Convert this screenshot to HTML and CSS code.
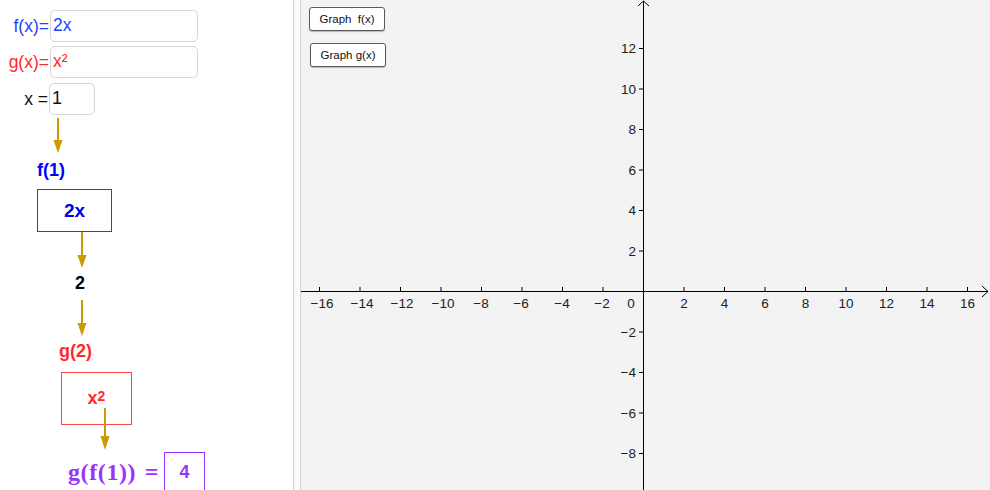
FILE: index.html
```html
<!DOCTYPE html>
<html>
<head>
<meta charset="utf-8">
<link rel="stylesheet" href="styles.css">
</head>
<body>
<div class="app">
  <div class="left">
    <div class="row r1">
      <span class="lbl blue">f(x)=</span>
      <div class="inp wide blue">2x</div>
    </div>
    <div class="row r2">
      <span class="lbl red">g(x)=</span>
      <div class="inp wide red">x²</div>
    </div>
    <div class="row r3">
      <span class="lbl lblx">x =</span>
      <div class="inp narrow">1</div>
    </div>
    <svg class="arrow a1" width="12" height="35" viewBox="0 0 12 35"><line x1="6" y1="0" x2="6" y2="24" stroke="#cc9900" stroke-width="2"/><polygon points="1.5,22 10.5,22 6,35" fill="#cc9900"/></svg>
    <div class="bold blue t-f1">f(1)</div>
    <div class="box box1 bold blue">2x</div>
    <svg class="arrow a2" width="12" height="36" viewBox="0 0 12 36"><line x1="6" y1="0" x2="6" y2="25" stroke="#cc9900" stroke-width="2"/><polygon points="1.5,23 10.5,23 6,36" fill="#cc9900"/></svg>
    <div class="bold t-2">2</div>
    <svg class="arrow a3" width="12" height="36" viewBox="0 0 12 36"><line x1="6" y1="0" x2="6" y2="25" stroke="#cc9900" stroke-width="2"/><polygon points="1.5,23 10.5,23 6,36" fill="#cc9900"/></svg>
    <div class="bold red t-g2">g(2)</div>
    <div class="box box2 bold red">x<sup>2</sup>
      <svg class="arrow a4" width="12" height="42" viewBox="0 0 12 42"><line x1="6" y1="0" x2="6" y2="30" stroke="#cc9900" stroke-width="2"/><polygon points="1.5,28 10.5,28 6,42" fill="#cc9900"/></svg>
    </div>
    <div class="result">
      <span class="rlabel">g(f(1)) =</span>
      <div class="box box3">4</div>
    </div>
  </div>
  <div class="divider"></div>
  <div class="graph">
    <svg class="plane" width="689" height="490" viewBox="0 0 689 490" font-family="Liberation Sans, Arial, sans-serif" font-size="13.5">
      <g stroke="#000" stroke-width="1">
        <line x1="0" y1="291.5" x2="687" y2="291.5"/>
        <polyline points="681,286 687,291.5 681,297" fill="none"/>
        <line x1="342.5" y1="1" x2="342.5" y2="490"/>
        <polyline points="337,6 342.5,1 348,6" fill="none"/>
      </g>
      <g stroke="#000" stroke-width="1">
        <line x1="18.5" y1="287" x2="18.5" y2="291"/>
        <line x1="59" y1="287" x2="59" y2="291"/>
        <line x1="99.5" y1="287" x2="99.5" y2="291"/>
        <line x1="140" y1="287" x2="140" y2="291"/>
        <line x1="180.5" y1="287" x2="180.5" y2="291"/>
        <line x1="221" y1="287" x2="221" y2="291"/>
        <line x1="261.5" y1="287" x2="261.5" y2="291"/>
        <line x1="302" y1="287" x2="302" y2="291"/>
        <line x1="383" y1="287" x2="383" y2="291"/>
        <line x1="423.5" y1="287" x2="423.5" y2="291"/>
        <line x1="464" y1="287" x2="464" y2="291"/>
        <line x1="504.5" y1="287" x2="504.5" y2="291"/>
        <line x1="545" y1="287" x2="545" y2="291"/>
        <line x1="585.5" y1="287" x2="585.5" y2="291"/>
        <line x1="626" y1="287" x2="626" y2="291"/>
        <line x1="666.5" y1="287" x2="666.5" y2="291"/>
        <line x1="338" y1="48.5" x2="342" y2="48.5"/>
        <line x1="338" y1="89" x2="342" y2="89"/>
        <line x1="338" y1="129.5" x2="342" y2="129.5"/>
        <line x1="338" y1="170" x2="342" y2="170"/>
        <line x1="338" y1="210.5" x2="342" y2="210.5"/>
        <line x1="338" y1="251" x2="342" y2="251"/>
        <line x1="338" y1="332" x2="342" y2="332"/>
        <line x1="338" y1="372.5" x2="342" y2="372.5"/>
        <line x1="338" y1="413" x2="342" y2="413"/>
        <line x1="338" y1="453.5" x2="342" y2="453.5"/>
      </g>
      <g fill="#222" text-anchor="middle">
        <text x="21" y="308">−16</text>
        <text x="61" y="308">−14</text>
        <text x="101" y="308">−12</text>
        <text x="142" y="308">−10</text>
        <text x="180" y="308">−8</text>
        <text x="220" y="308">−6</text>
        <text x="261" y="308">−4</text>
        <text x="301" y="308">−2</text>
        <text x="330" y="308">0</text>
        <text x="383" y="308">2</text>
        <text x="423.5" y="308">4</text>
        <text x="464" y="308">6</text>
        <text x="504.5" y="308">8</text>
        <text x="545" y="308">10</text>
        <text x="585.5" y="308">12</text>
        <text x="626" y="308">14</text>
        <text x="666.5" y="308">16</text>
      </g>
      <g fill="#222" text-anchor="end">
        <text x="335" y="53">12</text>
        <text x="335" y="93.5">10</text>
        <text x="335" y="134">8</text>
        <text x="335" y="174.5">6</text>
        <text x="335" y="215">4</text>
        <text x="335" y="255.5">2</text>
        <text x="335" y="336.5">−2</text>
        <text x="335" y="377">−4</text>
        <text x="335" y="417.5">−6</text>
        <text x="335" y="458">−8</text>
      </g>
    </svg>
    <div class="buttons">
      <button class="btn b1">Graph  f(x)</button>
      <button class="btn b2">Graph g(x)</button>
    </div>
  </div>
</div>
</body>
</html>
```

FILE: styles.css
```css
html, body {
  margin: 0;
  padding: 0;
  background: #fff;
}
.app {
  display: flex;
  width: 990px;
  height: 490px;
  overflow: hidden;
  font-family: "Liberation Sans", Arial, sans-serif;
}
.left {
  width: 293px;
  flex: none;
  display: flex;
  flex-direction: column;
  align-items: flex-start;
  background: #fff;
  overflow: hidden;
}
.left > * {
  flex-shrink: 0;
}
.divider {
  width: 6px;
  flex: none;
  border-left: 1px solid #d2d2d2;
  border-right: 1px solid #d2d2d2;
  background: #f9f9f9;
}
.graph {
  position: relative;
  flex: 1;
  background: #f3f3f3;
}
.plane {
  position: absolute;
  left: 0;
  top: 0;
}
.buttons {
  position: relative;
  display: flex;
  flex-direction: column;
  align-items: flex-start;
  padding: 7px 0 0 8px;
}
.btn {
  font-family: "Liberation Sans", Arial, sans-serif;
  font-size: 11.5px;
  white-space: pre;
  height: 24px;
  width: 76px;
  padding: 0;
  background: #fff;
  color: #111;
  border: 1px solid #5a5a5a;
  border-radius: 3px;
  box-shadow: 0 1px 1px rgba(0,0,0,0.25);
}
.b2 {
  margin-top: 12px;
  margin-left: 1px;
}
.blue { color: #0000ff; }
.red { color: #ff2a2a; }
.row {
  display: flex;
  align-items: center;
}
.lbl {
  text-align: right;
  font-size: 17.5px;
  padding-right: 1px;
  box-sizing: border-box;
  width: 50px;
  white-space: nowrap;
}
.lbl.blue { color: #2244ff; }
.lblx { color: #111; width: 49px; }
.r1 { margin-top: 10px; }
.r2 { margin-top: 4px; }
.r3 { margin-top: 5px; }
.inp {
  box-sizing: border-box;
  height: 32px;
  border: 1.5px solid #d6d6d6;
  border-radius: 5px;
  font-size: 17.5px;
  line-height: 29px;
  padding-left: 2px;
  background: #fff;
}
.inp.wide { width: 148px; }
.inp.blue { color: #2244ff; }
.inp.narrow { width: 46px; color: #111; font-size: 18px; }
.arrow { display: block; }
.a1 { margin-left: 52px; margin-top: 3px; }
.bold {
  font-weight: bold;
  font-size: 18px;
  line-height: 20px;
}
.t-f1 { margin-left: 37px; margin-top: 7px; }
.box {
  box-sizing: border-box;
  display: flex;
  align-items: center;
  justify-content: center;
  background: #fff;
}
.box1 {
  width: 75px;
  height: 43px;
  margin-left: 37px;
  margin-top: 9px;
  border: 1px solid #3333ff;
  color: #0000ee;
  font-size: 19px;
}
.a2 { margin-left: 76px; margin-top: 0; }
.t-2 { margin-left: 75px; margin-top: 5px; color: #000; }
.a3 { margin-left: 76px; margin-top: 7px; }
.t-g2 { margin-left: 59px; margin-top: 5px; }
.box2 {
  position: relative;
  width: 71px;
  height: 53px;
  margin-left: 61px;
  margin-top: 11px;
  border: 1px solid #ff4444;
  color: #ff2a2a;
  padding-bottom: 2px;
}
.box2 sup {
  font-size: 14px;
  position: relative;
  top: -2px;
}
.a4 {
  position: absolute;
  left: 37px;
  top: 35px;
}
.result {
  display: flex;
  align-items: flex-start;
  margin-left: 68px;
  margin-top: 27px;
}
.rlabel {
  font-family: "Liberation Serif", "DejaVu Serif", serif;
  font-weight: bold;
  font-size: 24px;
  letter-spacing: 0.6px;
  word-spacing: 2px;
  color: #9933ff;
  margin-top: 7px;
  white-space: nowrap;
}
.box3 {
  width: 41px;
  height: 50px;
  margin-left: 5px;
  border: 1px solid #9933ff;
  color: #9933ff;
  font-weight: bold;
  font-size: 18px;
  padding-bottom: 10px;
  font-family: "Liberation Sans", Arial, sans-serif;
}
```
